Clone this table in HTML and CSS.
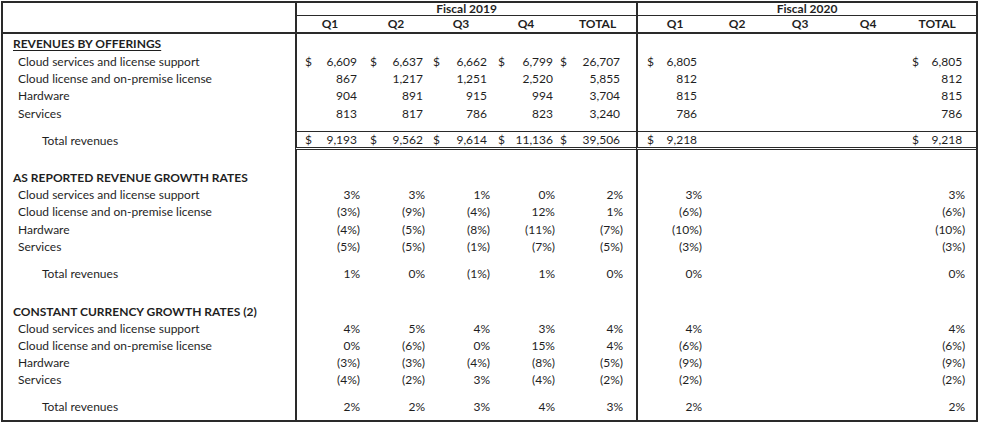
FILE: index.html
```html
<!DOCTYPE html>
<html>
<head>
<meta charset="utf-8">
<link rel="stylesheet" href="styles.css">
</head>
<body>
<table class="fin">
<colgroup>
<col class="w-lbl"><col class="w-a1"><col class="w-a2"><col class="w-a3"><col class="w-a4"><col class="w-a5"><col class="w-b1"><col class="w-b2"><col class="w-b3"><col class="w-b4"><col class="w-b5">
</colgroup>
<tr class="h1"><td class="corner" rowspan="2"></td><td class="fy" colspan="5">Fiscal 2019</td><td class="fy" colspan="5">Fiscal 2020</td></tr>
<tr class="h2"><td>Q1</td><td>Q2</td><td>Q3</td><td>Q4</td><td>TOTAL</td><td>Q1</td><td>Q2</td><td>Q3</td><td>Q4</td><td>TOTAL</td></tr>

<tr class="sec first"><td class="lbl hd"><u>REVENUES BY OFFERINGS</u></td><td></td><td></td><td></td><td></td><td></td><td></td><td></td><td></td><td></td><td></td></tr>
<tr class="it"><td class="lbl">Cloud services and license support</td><td class="c1 n"><span class="d">$</span>6,609</td><td class="c2 n"><span class="d">$</span>6,637</td><td class="c3 n"><span class="d">$</span>6,662</td><td class="c4 n"><span class="d">$</span>6,799</td><td class="c5 n"><span class="d">$</span>26,707</td><td class="c6 n"><span class="d">$</span>6,805</td><td></td><td></td><td></td><td class="c10 n"><span class="d">$</span>6,805</td></tr>
<tr class="it"><td class="lbl">Cloud license and on-premise license</td><td class="c1 n">867</td><td class="c2 n">1,217</td><td class="c3 n">1,251</td><td class="c4 n">2,520</td><td class="c5 n">5,855</td><td class="c6 n">812</td><td></td><td></td><td></td><td class="c10 n">812</td></tr>
<tr class="it"><td class="lbl">Hardware</td><td class="c1 n">904</td><td class="c2 n">891</td><td class="c3 n">915</td><td class="c4 n">994</td><td class="c5 n">3,704</td><td class="c6 n">815</td><td></td><td></td><td></td><td class="c10 n">815</td></tr>
<tr class="it"><td class="lbl">Services</td><td class="c1 n">813</td><td class="c2 n">817</td><td class="c3 n">786</td><td class="c4 n">823</td><td class="c5 n">3,240</td><td class="c6 n">786</td><td></td><td></td><td></td><td class="c10 n">786</td></tr>
<tr class="sp"><td></td><td></td><td></td><td></td><td></td><td></td><td></td><td></td><td></td><td></td><td></td></tr>
<tr class="tot boxed"><td class="lbl tl">Total revenues</td><td class="c1 n"><span class="d">$</span>9,193</td><td class="c2 n"><span class="d">$</span>9,562</td><td class="c3 n"><span class="d">$</span>9,614</td><td class="c4 n"><span class="d">$</span>11,136</td><td class="c5 n"><span class="d">$</span>39,506</td><td class="c6 n"><span class="d">$</span>9,218</td><td></td><td></td><td></td><td class="c10 n"><span class="d">$</span>9,218</td></tr>
<tr class="gap first-gap"><td></td><td></td><td></td><td></td><td></td><td></td><td></td><td></td><td></td><td></td><td></td></tr>

<tr class="sec"><td class="lbl hd">AS REPORTED REVENUE GROWTH RATES</td><td></td><td></td><td></td><td></td><td></td><td></td><td></td><td></td><td></td><td></td></tr>
<tr class="it"><td class="lbl">Cloud services and license support</td><td class="c1 p">3%</td><td class="c2 p">3%</td><td class="c3 p">1%</td><td class="c4 p">0%</td><td class="c5 p">2%</td><td class="c6 p">3%</td><td></td><td></td><td></td><td class="c10 p">3%</td></tr>
<tr class="it"><td class="lbl">Cloud license and on-premise license</td><td class="c1 p">(3%)</td><td class="c2 p">(9%)</td><td class="c3 p">(4%)</td><td class="c4 p">12%</td><td class="c5 p">1%</td><td class="c6 p">(6%)</td><td></td><td></td><td></td><td class="c10 p">(6%)</td></tr>
<tr class="it"><td class="lbl">Hardware</td><td class="c1 p">(4%)</td><td class="c2 p">(5%)</td><td class="c3 p">(8%)</td><td class="c4 p">(11%)</td><td class="c5 p">(7%)</td><td class="c6 p">(10%)</td><td></td><td></td><td></td><td class="c10 p">(10%)</td></tr>
<tr class="it"><td class="lbl">Services</td><td class="c1 p">(5%)</td><td class="c2 p">(5%)</td><td class="c3 p">(1%)</td><td class="c4 p">(7%)</td><td class="c5 p">(5%)</td><td class="c6 p">(3%)</td><td></td><td></td><td></td><td class="c10 p">(3%)</td></tr>
<tr class="sp"><td></td><td></td><td></td><td></td><td></td><td></td><td></td><td></td><td></td><td></td><td></td></tr>
<tr class="tot"><td class="lbl tl">Total revenues</td><td class="c1 p">1%</td><td class="c2 p">0%</td><td class="c3 p">(1%)</td><td class="c4 p">1%</td><td class="c5 p">0%</td><td class="c6 p">0%</td><td></td><td></td><td></td><td class="c10 p">0%</td></tr>
<tr class="gap"><td></td><td></td><td></td><td></td><td></td><td></td><td></td><td></td><td></td><td></td><td></td></tr>

<tr class="sec"><td class="lbl hd">CONSTANT CURRENCY GROWTH RATES (2)</td><td></td><td></td><td></td><td></td><td></td><td></td><td></td><td></td><td></td><td></td></tr>
<tr class="it"><td class="lbl">Cloud services and license support</td><td class="c1 p">4%</td><td class="c2 p">5%</td><td class="c3 p">4%</td><td class="c4 p">3%</td><td class="c5 p">4%</td><td class="c6 p">4%</td><td></td><td></td><td></td><td class="c10 p">4%</td></tr>
<tr class="it"><td class="lbl">Cloud license and on-premise license</td><td class="c1 p">0%</td><td class="c2 p">(6%)</td><td class="c3 p">0%</td><td class="c4 p">15%</td><td class="c5 p">4%</td><td class="c6 p">(6%)</td><td></td><td></td><td></td><td class="c10 p">(6%)</td></tr>
<tr class="it"><td class="lbl">Hardware</td><td class="c1 p">(3%)</td><td class="c2 p">(3%)</td><td class="c3 p">(4%)</td><td class="c4 p">(8%)</td><td class="c5 p">(5%)</td><td class="c6 p">(9%)</td><td></td><td></td><td></td><td class="c10 p">(9%)</td></tr>
<tr class="it"><td class="lbl">Services</td><td class="c1 p">(4%)</td><td class="c2 p">(2%)</td><td class="c3 p">3%</td><td class="c4 p">(4%)</td><td class="c5 p">(2%)</td><td class="c6 p">(2%)</td><td></td><td></td><td></td><td class="c10 p">(2%)</td></tr>
<tr class="sp"><td></td><td></td><td></td><td></td><td></td><td></td><td></td><td></td><td></td><td></td><td></td></tr>
<tr class="tot"><td class="lbl tl">Total revenues</td><td class="c1 p">2%</td><td class="c2 p">2%</td><td class="c3 p">3%</td><td class="c4 p">4%</td><td class="c5 p">3%</td><td class="c6 p">2%</td><td></td><td></td><td></td><td class="c10 p">2%</td></tr>
<tr class="end"><td></td><td></td><td></td><td></td><td></td><td></td><td></td><td></td><td></td><td></td><td></td></tr>
</table>
</body>
</html>
```

FILE: styles.css
```css
* { box-sizing: border-box; }

body {
  margin: 0;
  background: #ffffff;
  font-family: Lato, "Liberation Sans", sans-serif;
  font-size: 12px;
  color: #1f1f1f;
}

.fin {
  margin: 1px 0 0 1px;
  width: 977px;
  table-layout: fixed;
  border-collapse: separate;
  border-spacing: 0;
  border: 2px solid #2a2a2a;
}

.w-lbl { width: 292px; }
.w-a1 { width: 68px; }
.w-a2 { width: 66px; }
.w-a3 { width: 64px; }
.w-a4 { width: 66px; }
.w-a5 { width: 77px; }
.w-b1 { width: 76px; }
.w-b2 { width: 50px; }
.w-b3 { width: 76px; }
.w-b4 { width: 60px; }
.w-b5 { width: 78px; }

.fin td {
  padding: 0;
  white-space: nowrap;
  vertical-align: middle;
  line-height: 14px;
}

/* header */
.h1 { height: 13px; }
.h1 td { line-height: 12px; }
.fy {
  font-weight: 700;
  text-align: center;
  border-left: 2px solid #2a2a2a;
  border-bottom: 1px solid #2a2a2a;
}
.corner { border-bottom: 2px solid #2a2a2a; }
.h2 { height: 18px; }
.h2 td {
  font-weight: 700;
  text-align: center;
  border-bottom: 2px solid #2a2a2a;
}
.h2 td:nth-child(1),
.h2 td:nth-child(6) { border-left: 2px solid #2a2a2a; }

/* body section separators */
.sec td:nth-child(2), .sec td:nth-child(7),
.it td:nth-child(2), .it td:nth-child(7),
.sp td:nth-child(2), .sp td:nth-child(7),
.tot td:nth-child(2), .tot td:nth-child(7),
.gap td:nth-child(2), .gap td:nth-child(7),
.end td:nth-child(2), .end td:nth-child(7) { border-left: 2px solid #2a2a2a; }

/* row heights */
.sec { height: 17.2px; }
.sec.first { height: 19.5px; }
.it { height: 17.2px; }
.sp { height: 9.2px; }
.tot { height: 18px; }
.tot.boxed { height: 19px; }
.gap { height: 20.5px; }
.gap.first-gap { height: 19px; }
.end { height: 4px; }

.boxed td:not(.lbl) {
  border-top: 1px solid #2a2a2a;
  border-bottom: 3px double #2a2a2a;
}

/* labels */
.lbl { padding-left: 15px !important; }
.lbl.hd { padding-left: 10px !important; font-weight: 700; }
.lbl.hd u { text-decoration-thickness: 1px; text-underline-offset: 2px; }
.lbl.tl { padding-left: 39px !important; }

/* numeric cells */
.n, .p { text-align: right; }
.d { float: left; }

.c1 { padding: 0 6px 0 8px !important; }
.c2 { padding: 0 6px 0 7px !important; }
.c3 { padding: 0 6px 0 4px !important; }
.c4 { padding: 0 6px 0 5px !important; }
.c5 { padding: 0 16px 0 1px !important; }
.c6 { padding: 0 15px 0 9px !important; }
.c10 { padding: 0 14px 0 14px !important; }

.c1.p { padding-right: 3px !important; }
.c2.p { padding-right: 4px !important; }
.c3.p { padding-right: 3px !important; }
.c4.p { padding-right: 4px !important; }
.c5.p { padding-right: 13px !important; }
.c6.p { padding-right: 10px !important; }
.c10.p { padding-right: 11px !important; }
```
